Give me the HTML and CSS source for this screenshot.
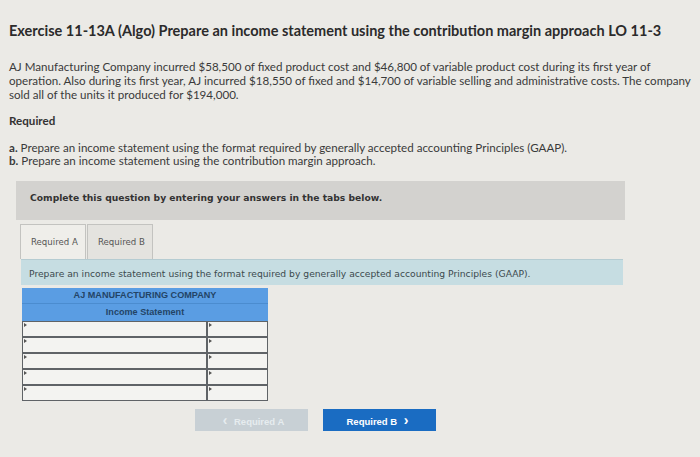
FILE: index.html
```html
<!DOCTYPE html>
<html>
<head>
<meta charset="utf-8">
<link rel="stylesheet" href="styles.css">
</head>
<body>
<div class="page">
  <h1 class="title">Exercise 11-13A (Algo) Prepare an income statement using the contribution margin approach LO 11-3</h1>
  <p class="problem">AJ Manufacturing Company incurred $58,500 of fixed product cost and $46,800 of variable product cost during its first year of<br>operation. Also during its first year, AJ incurred $18,550 of fixed and $14,700 of variable selling and administrative costs. The company<br>sold all of the units it produced for $194,000.</p>
  <div class="req-label">Required</div>
  <div class="req-list">
    <div><b>a.</b> Prepare an income statement using the format required by generally accepted accounting Principles (GAAP).</div>
    <div><b>b.</b> Prepare an income statement using the contribution margin approach.</div>
  </div>
  <div class="complete-box">Complete this question by entering your answers in the tabs below.</div>
  <div class="tabs">
    <div class="tab active">Required A</div>
    <div class="tab">Required B</div>
  </div>
  <div class="instruction">Prepare an income statement using the format required by generally accepted accounting Principles (GAAP).</div>
  <div class="statement">
    <div class="hdr hdr1">AJ MANUFACTURING COMPANY</div>
    <div class="hdr hdr2">Income Statement</div>
    <div class="row"><div class="cell c1"></div><div class="cell c2"></div></div>
    <div class="row"><div class="cell c1"></div><div class="cell c2"></div></div>
    <div class="row"><div class="cell c1"></div><div class="cell c2"></div></div>
    <div class="row"><div class="cell c1"></div><div class="cell c2"></div></div>
    <div class="row"><div class="cell c1"></div><div class="cell c2"></div></div>
  </div>
  <div class="nav">
    <div class="btn prev"><span class="chev">&lsaquo;</span> Required A</div>
    <div class="btn next">Required B <span class="chev">&rsaquo;</span></div>
  </div>
</div>
</body>
</html>
```
FILE: styles.css
```css
html, body {
  margin: 0;
  padding: 0;
  background: #ebeae6;
}
.page {
  width: 700px;
  height: 457px;
  overflow: hidden;
  padding: 0 0 0 9px;
  box-sizing: border-box;
  font-family: "Lato", "Liberation Sans", sans-serif;
  color: #2e2e2e;
}
.title {
  margin: 22px 0 0 0;
  font-size: 14.5px;
  line-height: 18px;
  font-weight: 700;
  color: #2b2b2b;
  white-space: nowrap;
}
.problem {
  margin: 20px 0 0 0;
  font-size: 11.6px;
  line-height: 14px;
  color: #3a3a3a;
  white-space: nowrap;
}
.req-label {
  margin-top: 12px;
  font-size: 11.6px;
  line-height: 14px;
  font-weight: 700;
  color: #333;
}
.req-list {
  margin-top: 13px;
  font-size: 11.6px;
  line-height: 13px;
  color: #3a3a3a;
  white-space: nowrap;
}
.req-list b { font-weight: 700; }
.complete-box {
  margin: 14px 0 0 7px;
  width: 609px;
  height: 39px;
  box-sizing: border-box;
  padding: 11px 0 0 14px;
  background: #d3d2cf;
  font-family: "DejaVu Sans", sans-serif;
  font-weight: 700;
  font-size: 9.2px;
  color: #333;
}
.tabs {
  display: flex;
  margin: 4px 0 0 11px;
  gap: 1px;
}
.tab {
  height: 35px;
  box-sizing: border-box;
  padding: 12px 0 0 10px;
  width: 66px;
  border: 1px solid #c3c3c0;
  border-bottom: none;
  background: #e4e3df;
  font-family: "DejaVu Sans", sans-serif;
  font-size: 8.6px;
  color: #555;
  white-space: nowrap;
}
.tab.active { background: #efeeea; }
.instruction {
  margin-left: 12px;
  width: 602px;
  height: 26px;
  box-sizing: border-box;
  padding: 8px 0 0 8px;
  background: #c6dde2;
  border-top: 1px solid #b5ccd2;
  font-family: "DejaVu Sans", sans-serif;
  font-size: 9.2px;
  color: #3c4a4e;
  white-space: nowrap;
}
.statement {
  margin: 3px 0 0 13px;
  width: 246px;
}
.hdr {
  background: #5a9de3;
  color: #234466;
  font-family: "Liberation Sans", sans-serif;
  font-weight: 700;
  text-align: center;
  font-size: 9.1px;
}
.hdr1 {
  height: 15px;
  line-height: 15px;
  border-bottom: 1px solid #4b8ccf;
}
.hdr2 {
  height: 17px;
  line-height: 16px;
}
.row {
  display: flex;
  height: 16px;
}
.cell {
  position: relative;
  box-sizing: border-box;
  height: 16px;
  background: #f3f3f1;
  border: 1px solid #5f6367;
  border-bottom-width: 1.5px;
}
.cell::before {
  content: "";
  position: absolute;
  left: 1px;
  top: 1px;
  border-left: 3px solid #555;
  border-top: 2px solid transparent;
  border-bottom: 2px solid transparent;
}
.c1 { width: 186px; border-right: 2px solid #5f6367; }
.c2 { width: 60px; border-left: none; }
.nav {
  display: flex;
  gap: 15px;
  margin: 8px 0 0 186px;
}
.btn {
  width: 113px;
  height: 22px;
  line-height: 22px;
  text-align: center;
  font-family: "Liberation Sans", sans-serif;
  font-weight: 700;
  font-size: 9.5px;
}
.prev {
  background: #c8d0d5;
  color: #e6ecef;
}
.next {
  background: #1a6cc2;
  color: #ffffff;
}
.chev {
  font-size: 14px;
  margin: 0 4px;
}
```
